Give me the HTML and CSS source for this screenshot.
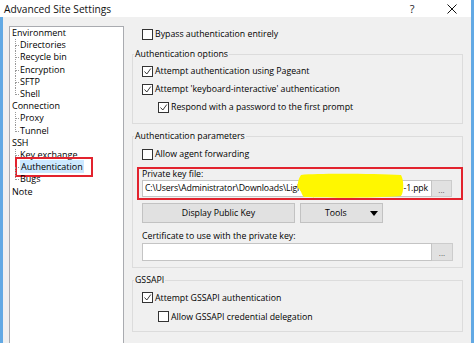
FILE: index.html
```html
<!DOCTYPE html>
<html lang="en">
<head>
    <meta charset="UTF-8">
    <title>Advanced Site Settings</title>
    <link rel="stylesheet" href="styles.css">
</head>
<body>

<div class="window">
    <div class="titlebar">
        <span class="title">Advanced Site Settings</span>
        <span class="caption-btn help">?</span>
        <span class="caption-btn close">
            <svg width="10" height="10" viewBox="0 0 10 10"><path d="M0.5 0.5L9.5 9.5M9.5 0.5L0.5 9.5" stroke="#111" stroke-width="1" fill="none"/></svg>
        </span>
    </div>

    <div class="client">
        <div class="tree">
            <ul>
                <li>Environment
                    <ul>
                        <li>Directories</li>
                        <li>Recycle bin</li>
                        <li>Encryption</li>
                        <li>SFTP</li>
                        <li>Shell</li>
                    </ul>
                </li>
                <li>Connection
                    <ul>
                        <li>Proxy</li>
                        <li>Tunnel</li>
                    </ul>
                </li>
                <li>SSH
                    <ul>
                        <li>Key exchange</li>
                        <li><span class="selected">Authentication</span></li>
                        <li>Bugs</li>
                    </ul>
                </li>
                <li>Note</li>
            </ul>
        </div>

        <div class="page">
            <label class="check top"><span class="cb"></span>Bypass authentication entirely</label>

            <fieldset class="group first">
                <legend>Authentication options</legend>
                <label class="check"><span class="cb on"><svg viewBox="0 0 9 9"><path d="M1.5 4.5L3.8 7L7.8 1.5" /></svg></span>Attempt authentication using Pageant</label>
                <label class="check"><span class="cb on"><svg viewBox="0 0 9 9"><path d="M1.5 4.5L3.8 7L7.8 1.5" /></svg></span>Attempt 'keyboard-interactive' authentication</label>
                <label class="check sub"><span class="cb on"><svg viewBox="0 0 9 9"><path d="M1.5 4.5L3.8 7L7.8 1.5" /></svg></span>Respond with a password to the first prompt</label>
            </fieldset>

            <fieldset class="group params">
                <legend>Authentication parameters</legend>
                <label class="check"><span class="cb"></span>Allow agent forwarding</label>

                <div class="keybox">
                    <div class="field-label">Private key file:</div>
                    <div class="file">
                        <div class="field path">
                            <span class="path-start">C:\Users\Administrator\Downloads\Ligh</span>
                            <span class="path-end">-1.ppk</span>
                        </div>
                        <div class="browse">...</div>
                    </div>
                    <svg class="marker" width="107" height="25" viewBox="0 0 107 25"><path d="M4 2C24 0 80 1 104 2C107 7 107 19 104 23C80 25 32 25 7 24C4 21 5 18 1 15C0 10 2 5 4 2Z" fill="#fff700"/></svg>
                </div>

                <div class="btns">
                    <div class="btn display">Display Public Key</div>
                    <div class="btn tools">Tools <svg width="8" height="5" viewBox="0 0 8 5"><path d="M0 0H8L4 5Z" fill="#000"/></svg></div>
                </div>

                <div class="field-label cert">Certificate to use with the private key:</div>
                <div class="file cert-file">
                    <div class="field"></div>
                    <div class="browse">...</div>
                </div>
            </fieldset>

            <fieldset class="group gss">
                <legend>GSSAPI</legend>
                <label class="check"><span class="cb on"><svg viewBox="0 0 9 9"><path d="M1.5 4.5L3.8 7L7.8 1.5" /></svg></span>Attempt GSSAPI authentication</label>
                <label class="check sub"><span class="cb"></span>Allow GSSAPI credential delegation</label>
            </fieldset>
        </div>
    </div>
</div>

</body>
</html>
```

FILE: styles.css
```css
html, body {
    height: 100%;
    margin: 0;
}
body {
    background-color: #62a9e4; /* desktop blue behind the dialog */
    font-family: 'Open Sans', sans-serif;
    font-size: 8.75px;
    color: #000;
    overflow: hidden;
}
.window {
    width: 471px;
    height: 343px;
    background-color: #f0f0f0;
    display: flex;
    flex-direction: column;
}

/* title bar */
.titlebar {
    height: 17px;
    background-color: white;
    display: flex;
    align-items: center;
}
.title {
    flex: 1;
    padding-left: 4px;
    font-size: 10.2px;
    color: #111;
}
.caption-btn {
    display: flex;
    align-items: center;
    justify-content: center;
    width: 20px;
    font-size: 11px;
    color: #222;
}
.help {
    margin-right: 20px;
}
.close {
    margin-right: 9px;
}

/* body of the dialog */
.client {
    flex: 1;
    display: flex;
    border-left: 3px solid #62a9e4;
    padding-top: 9px;
}

/* navigation tree */
.tree {
    box-sizing: border-box;
    width: 115px;
    margin-left: 6px;
    background-color: white;
    border: 1px solid #a9abb0;
    border-bottom: none;
    padding-left: 2px;
    line-height: 12.2px;
    font-size: 9px;
}
.tree ul {
    list-style: none;
    margin: 0;
    padding: 0;
}
.tree ul ul {
    margin-left: 3px;
}
.tree ul ul li {
    position: relative;
    padding-left: 5px;
}
.tree ul ul li::before {
    content: "";
    position: absolute;
    left: 0;
    top: 0;
    width: 3px;
    height: 6px;
    border-left: 1px dotted #999;
    border-bottom: 1px dotted #999;
}
.tree ul ul li:not(:last-child)::after {
    content: "";
    position: absolute;
    left: 0;
    top: 6px;
    bottom: 0;
    border-left: 1px dotted #999;
}
.selected {
    position: relative;
    background-color: #cce8ff;
    padding: 0 1px;
}
.selected::after {
    content: "";
    position: absolute;
    left: -5px;
    right: -9px;
    top: -3px;
    bottom: -4px;
    border: 2px solid #e2232e; /* red annotation */
}

/* settings page */
.page {
    width: 331px;
    margin-left: 8px;
}
.check {
    display: flex;
    align-items: center;
    height: 18px;
    gap: 2px;
}
.check.top {
    height: 16px;
    padding-left: 10px;
}
.check.sub {
    padding-left: 16px;
}
.cb {
    box-sizing: border-box;
    width: 11px;
    height: 11px;
    border: 1px solid #333;
    background-color: white;
    display: flex;
}
.cb svg {
    width: 9px;
    height: 9px;
}
.cb svg path {
    fill: none;
    stroke: #222;
    stroke-width: 0.9;
}

.group {
    box-sizing: border-box;
    width: 100%;
    margin: 6px 0 0;
    border: 1px solid #dcdcdc;
    padding: 0 9px 7px 9px;
    min-width: 0;
}
.group legend {
    margin-left: -8px;
    padding: 0 1px;
    line-height: 13px;
}
.group.first {
    padding-top: 1px;
}
.params {
    padding-top: 2px;
    padding-bottom: 6px;
}
.gss .check {
    height: 19px;
}
.gss {
    padding-top: 1px;
    padding-bottom: 5px;
}

.keybox {
    position: relative;
    margin: 4px -10px 0 -5px;
    border: 2px solid #e2232e; /* red annotation */
    padding: 0 9px 1px 3px;
}
.field-label {
    height: 11px;
    line-height: 11px;
}
.file {
    display: flex;
    height: 17px;
}
.field {
    flex: 1;
    box-sizing: border-box;
    background-color: white;
    border: 1px solid #c4c4c4;
    padding-left: 2px;
    line-height: 15px;
    white-space: nowrap;
    overflow: hidden;
}
.field.path {
    display: flex;
    justify-content: space-between;
    padding-right: 3px;
    letter-spacing: -0.15px;
}
.path-start {
    overflow: hidden;
}
.browse {
    box-sizing: border-box;
    width: 20px;
    background-color: #e1e1e1;
    border: 1px solid #cccccc;
    border-left: none;
    text-align: center;
    color: #555;
    font-size: 8px;
    line-height: 17px;
}
.marker {
    position: absolute;
    left: 158px;
    top: 4px;
}

.btns {
    display: flex;
    gap: 5px;
    margin-top: 3px;
}
.btn {
    box-sizing: border-box;
    height: 20px;
    background-color: #e1e1e1;
    border: 1px solid #c2c2c2;
    display: flex;
    align-items: center;
}
.btn.display {
    width: 153px;
    justify-content: center;
}
.btn.tools {
    width: 83px;
    justify-content: space-between;
    padding: 0 4px 0 24px;
}
.field-label.cert {
    margin-top: 7px;
    height: 12px;
    line-height: 12px;
}
.cert-file {
    margin-top: 1px;
    height: 18px;
}
.cert-file .browse {
    width: 21px;
    line-height: 18px;
}
```
